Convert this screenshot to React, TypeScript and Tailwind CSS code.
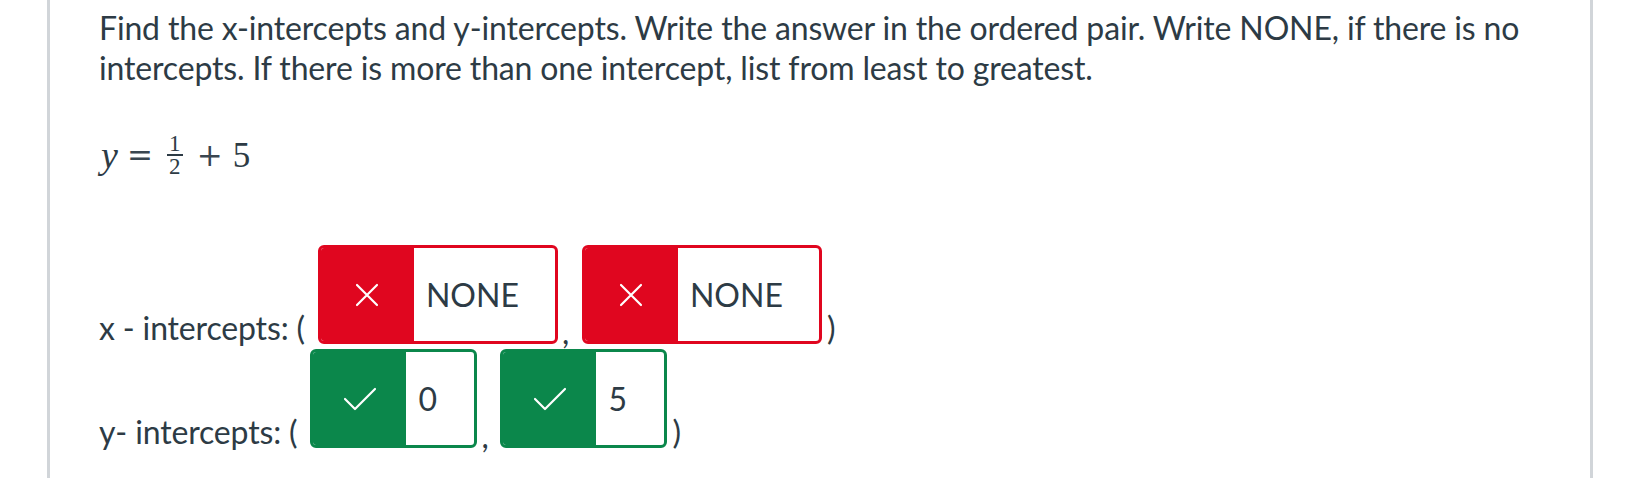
import React from "react";

const XIcon = () => (
  <svg width="24" height="24" viewBox="0 0 24 24" fill="none" stroke="white" strokeWidth="2.2" strokeLinecap="round">
    <path d="M2 2 L22 22 M22 2 L2 22" />
  </svg>
);

const CheckIcon = () => (
  <svg width="34" height="24" viewBox="0 0 34 24" fill="none" stroke="white" strokeWidth="2.2" strokeLinecap="round" strokeLinejoin="round">
    <path d="M2 12 L12 22 L32 2" />
  </svg>
);

function AnswerBox({ ok, value, width }: { ok: boolean; value: string; width: string }) {
  return (
    <div
      className={
        "flex h-[99px] overflow-hidden rounded-[6px] border-[3px] bg-white " +
        width +
        (ok ? " border-[#0b874b]" : " border-[#e0061f]")
      }
    >
      <div className={"flex w-[93px] shrink-0 items-center justify-center " + (ok ? "bg-[#0b874b]" : "bg-[#e0061f]")}>
        {ok ? <CheckIcon /> : <XIcon />}
      </div>
      <div className="flex items-center pl-[12px] text-[32px] leading-none text-[#2d3b45]">{value}</div>
    </div>
  );
}

const serif = { fontFamily: "'Liberation Serif', 'DejaVu Serif', serif" };
const opFont = { fontFamily: "'DejaVu Serif', 'Liberation Serif', serif" };

export default function App() {
  return (
    <div className="h-[478px] w-[1640px] overflow-hidden bg-white" style={{ fontFamily: "Lato, 'Open Sans', sans-serif" }}>
      <div className="ml-[47px] h-full w-[1546px] border-x-[3px] border-[#d1d5d9] pl-[49px] pr-[40px] pt-[8px] text-[#2d3b45]">
        <p className="text-[32px] leading-[40px] tracking-[-0.15px]">
          Find the x-intercepts and y-intercepts. Write the answer in the ordered pair. Write NONE, if there is no intercepts. If there is more than one intercept, list from least to greatest.
        </p>
        <div className="mt-[42px] flex h-[50px] items-center pl-[2px] leading-none">
          <span className="text-[38px] italic" style={serif}>y</span>
          <span className="ml-[9px] font-light text-[31px] text-[#3a4650]" style={opFont}>=</span>
          <span className="ml-[14px] flex flex-col items-center text-[23px] leading-[21px]" style={serif}>
            <span>1</span>
            <span className="h-[1.5px] w-[16px] bg-[#2d3b45]" />
            <span>2</span>
          </span>
          <span className="ml-[14px] font-light text-[31px] text-[#3a4650]" style={opFont}>+</span>
          <span className="ml-[10px] text-[35px]" style={serif}>5</span>
        </div>
        <div className="mt-[65px] flex flex-col gap-[5px]">
          <div className="flex items-end">
            <span className="mb-[-4px] text-[32px] leading-[40px] tracking-[-0.15px]">x - intercepts: (</span>
            <div className="ml-[13px]">
              <AnswerBox ok={false} value="NONE" width="w-[240px]" />
            </div>
            <span className="mb-[-8px] ml-[4px] w-[20px] text-[32px] leading-[40px]">,</span>
            <AnswerBox ok={false} value="NONE" width="w-[240px]" />
            <span className="mb-[-4px] ml-[5px] text-[32px] leading-[40px]">)</span>
          </div>
          <div className="flex items-end">
            <span className="mb-[-4px] text-[32px] leading-[40px] tracking-[-0.15px]">y- intercepts: (</span>
            <div className="ml-[13px]">
              <AnswerBox ok={true} value="0" width="w-[167px]" />
            </div>
            <span className="mb-[-8px] ml-[4px] w-[19px] text-[32px] leading-[40px]">,</span>
            <AnswerBox ok={true} value="5" width="w-[167px]" />
            <span className="mb-[-4px] ml-[5px] text-[32px] leading-[40px]">)</span>
          </div>
        </div>
      </div>
    </div>
  );
}
